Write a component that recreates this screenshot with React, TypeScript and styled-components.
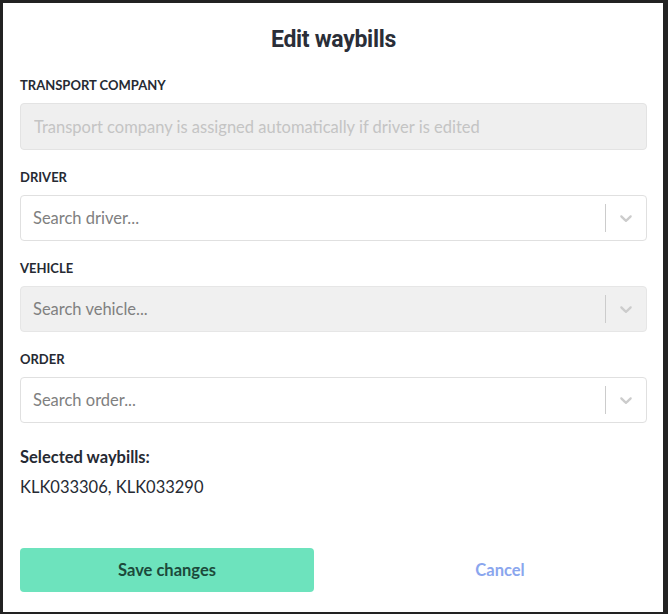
import React from 'react'
import styled, { createGlobalStyle } from 'styled-components'

const GlobalStyle = createGlobalStyle`
  html, body {
    margin: 0;
    padding: 0;
    background: #222222;
  }
  body {
    font-family: Lato, "Noto Sans", sans-serif;
  }
  * {
    box-sizing: border-box;
  }
`

const Chevron: React.FunctionComponent = () => (
  <svg width="20" height="20" viewBox="0 0 20 20" aria-hidden="true" focusable="false">
    <path
      fill="currentColor"
      d="M4.516 7.548c0.436-0.446 1.043-0.481 1.576 0l3.908 3.747 3.908-3.747c0.533-0.481 1.141-0.446 1.574 0 0.436 0.445 0.408 1.197 0 1.615-0.406 0.418-4.695 4.502-4.695 4.502-0.217 0.223-0.502 0.335-0.787 0.335s-0.57-0.112-0.789-0.335c0 0-4.287-4.084-4.695-4.502s-0.436-1.17 0-1.615z"
    />
  </svg>
)

type SelectProps = { placeholder: string; disabled?: boolean }

const Select: React.FunctionComponent<SelectProps> = ({ placeholder, disabled }) => (
  <Control disabled={disabled}>
    <ValueBox>{placeholder}</ValueBox>
    <Indicators>
      <Separator />
      <Indicator>
        <Chevron />
      </Indicator>
    </Indicators>
  </Control>
)

const App: React.FunctionComponent = () => (
  <>
    <GlobalStyle />
    <Modal>
      <Title>Edit waybills</Title>
      <Form>
        <Field>
          <Label>Transport company</Label>
          <TextInput disabled placeholder="Transport company is assigned automatically if driver is edited" />
        </Field>
        <Field>
          <Label>Driver</Label>
          <Select placeholder="Search driver..." />
        </Field>
        <Field>
          <Label>Vehicle</Label>
          <Select placeholder="Search vehicle..." disabled />
        </Field>
        <Field>
          <Label>Order</Label>
          <Select placeholder="Search order..." />
        </Field>
      </Form>
      <Summary>
        <SummaryHeading>Selected waybills:</SummaryHeading>
        <SummaryText>KLK033306, KLK033290</SummaryText>
      </Summary>
      <Actions>
        <SaveButton type="button">Save changes</SaveButton>
        <CancelButton type="button">Cancel</CancelButton>
      </Actions>
    </Modal>
  </>
)

export default App

const Modal = styled.div`
  width: 660px;
  height: 609px;
  margin: 3px 0 0 3px;
  padding: 22px 16px 20px 17px;
  background: #fff;
  display: flex;
  flex-direction: column;
`

const Title = styled.h2`
  margin: 0 0 22px;
  text-align: center;
  font-family: Roboto, "Liberation Sans", sans-serif;
  font-size: 23px;
  line-height: 30px;
  font-weight: 700;
  color: #2a2e38;
  letter-spacing: -0.3px;
`

const Form = styled.div`
  display: flex;
  flex-direction: column;
  gap: 19px;
`

const Field = styled.div`
  display: flex;
  flex-direction: column;
  gap: 10px;
`

const Label = styled.label`
  font-size: 13px;
  line-height: 16px;
  font-weight: 700;
  text-transform: uppercase;
  color: #262a33;
`

const TextInput = styled.input`
  height: 47px;
  padding: 0 13px;
  border: 1px solid #e3e3e3;
  border-radius: 4px;
  background: #efefef;
  font-family: inherit;
  font-size: 16.5px;
  outline: none;

  &::placeholder {
    color: #c4c4c4;
  }
`

const Control = styled.div<{ disabled?: boolean }>`
  height: 46px;
  display: flex;
  align-items: center;
  border: 1px solid ${({ disabled }) => (disabled ? '#e6e6e6' : '#e0e0e0')};
  border-radius: 4px;
  background: ${({ disabled }) => (disabled ? '#f0f0f0' : '#fff')};
`

const ValueBox = styled.div`
  flex: 1;
  padding: 0 12px;
  font-size: 16.5px;
  color: #808080;
`

const Indicators = styled.div`
  display: flex;
  align-items: stretch;
  align-self: stretch;
`

const Separator = styled.span`
  width: 1px;
  margin: 8px 0;
  background: #cccccc;
`

const Indicator = styled.div`
  display: flex;
  align-items: center;
  padding: 0 10px;
  color: #cccccc;
`

const Summary = styled.div`
  margin-top: 24px;
  display: flex;
  flex-direction: column;
  gap: 10px;
`

const SummaryHeading = styled.div`
  font-size: 16.5px;
  line-height: 20px;
  font-weight: 700;
  color: #262a33;
`

const SummaryText = styled.div`
  font-size: 16.5px;
  line-height: 20px;
  color: #262a33;
`

const Actions = styled.div`
  margin-top: auto;
  display: grid;
  grid-template-columns: 1fr 1fr;
  column-gap: 39px;
`

const SaveButton = styled.button`
  height: 44px;
  border: none;
  border-radius: 4px;
  background: #6de3bd;
  font-family: inherit;
  font-size: 16.5px;
  font-weight: 700;
  color: #1c4a3b;
  cursor: pointer;
`

const CancelButton = styled.button`
  height: 44px;
  border: none;
  background: transparent;
  font-family: inherit;
  font-size: 16.5px;
  font-weight: 700;
  color: #8aa6ee;
  cursor: pointer;
`
